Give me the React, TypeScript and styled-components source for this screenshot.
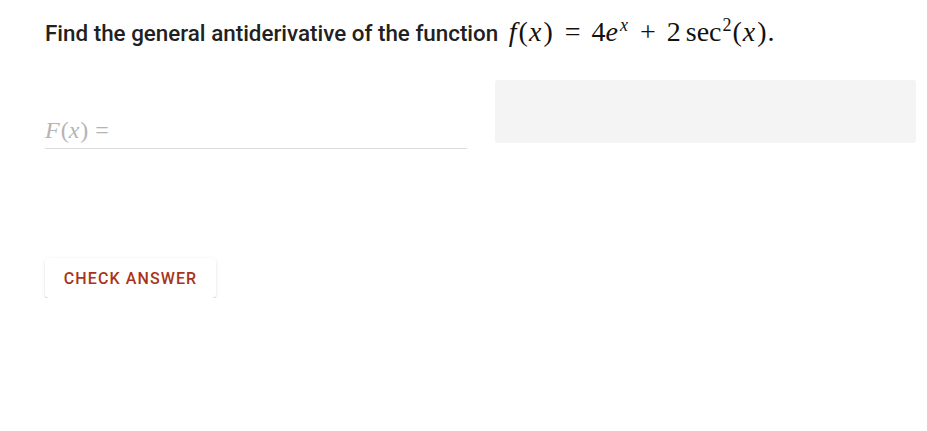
import styled, { createGlobalStyle } from "styled-components";

const Global = createGlobalStyle`
  body {
    margin: 0;
    background: #fff;
    font-family: Roboto, "Liberation Sans", sans-serif;
  }
`;

const App = () => {
  return (
    <Page>
      <Global />
      <Question>
        Find the general antiderivative of the function{" "}
        <Math>
          <I>f</I>
          <Paren>(</Paren>
          <I>x</I>
          <Paren>)</Paren>
          <Op>=</Op>4<I>e</I>
          <Sup>
            <I>x</I>
          </Sup>
          <Op>+</Op>2<Fn>sec</Fn>
          <Sup>2</Sup>
          <Paren>(</Paren>
          <I>x</I>
          <Paren>)</Paren>.
        </Math>
      </Question>
      <AnswerRow>
        <Field>
          <Placeholder>
            <I>F</I>(<I>x</I>)<Op $light>=</Op>
          </Placeholder>
        </Field>
        <Preview />
      </AnswerRow>
      <CheckButton>Check Answer</CheckButton>
    </Page>
  );
};

export default App;

const Page = styled.div`
  padding: 14px 11px 0 45px;
`;

const Question = styled.h2`
  margin: 0;
  font-size: 22.4px;
  font-weight: 500;
  color: #212121;
  line-height: 36px;
`;

const Math = styled.span`
  font-family: "Liberation Serif", "DejaVu Serif", serif;
  font-weight: 400;
  font-size: 28px;
  color: #111;
  margin-left: 5px;
`;

const I = styled.i`
  font-style: italic;
  padding-right: 1px;
`;

const Paren = styled.span`
  padding: 0 1px;
`;

const Op = styled.span<{ $light?: boolean }>`
  padding: 0 ${(p) => (p.$light ? "7px" : "11px")};
`;

const Fn = styled.span`
  margin-left: 5px;
`;

const Sup = styled.sup`
  font-size: 18px;
  vertical-align: 10px;
  line-height: 0;
  padding-left: 1px;
`;

const AnswerRow = styled.div`
  display: grid;
  grid-template-columns: 1fr 1fr;
  gap: 27px;
  margin-top: 29px;
`;

const Field = styled.div`
  display: flex;
  align-items: flex-end;
  height: 69px;
  border-bottom: 1px solid #dcdcdc;
  padding-bottom: 4px;
  box-sizing: border-box;
`;

const Placeholder = styled.span`
  font-family: "Liberation Serif", "DejaVu Serif", serif;
  font-size: 24px;
  color: #b4b4b4;
`;

const Preview = styled.div`
  height: 63px;
  background: #f4f4f4;
  border-radius: 3px;
  margin-left: 1px;
`;

const CheckButton = styled.button`
  display: block;
  margin-top: 109px;
  width: 171px;
  height: 40px;
  border: 0;
  outline: none;
  border-radius: 4px;
  background: #fff;
  color: #a8351a;
  font-family: Roboto, "Liberation Sans", sans-serif;
  font-size: 16px;
  font-weight: 500;
  letter-spacing: 1.1px;
  text-transform: uppercase;
  box-shadow: 0 2px 2px -1px rgba(0, 0, 0, 0.4), 0 1px 4px rgba(0, 0, 0, 0.08);
  cursor: pointer;
`;
